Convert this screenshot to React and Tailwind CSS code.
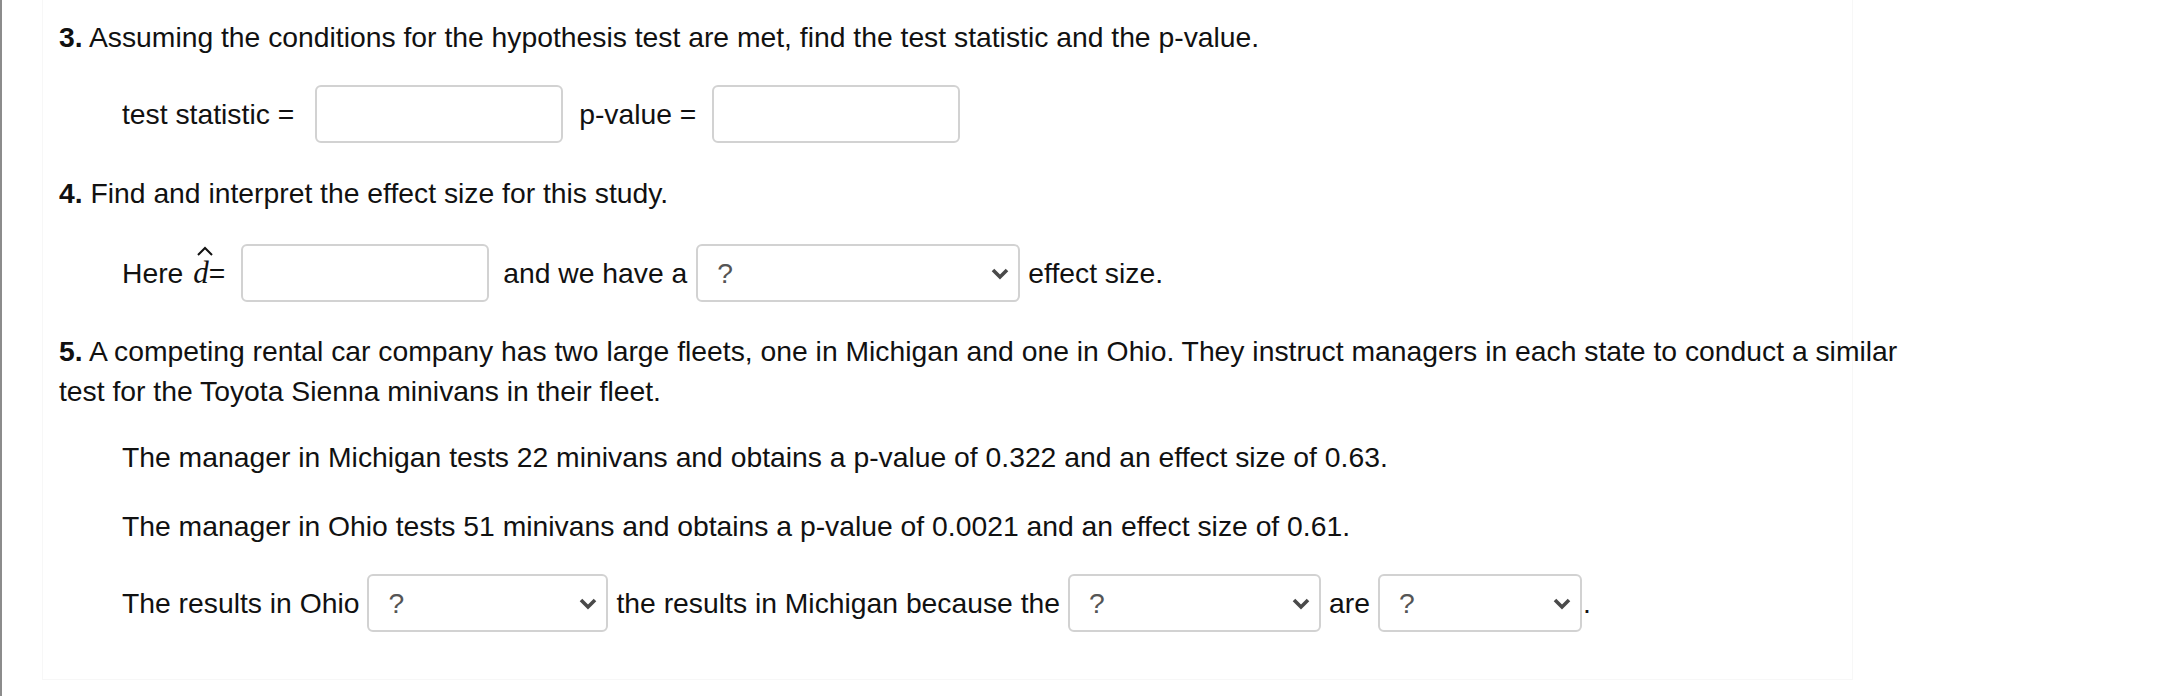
import React from 'react';

function Chevron() {
  return (
    <svg width="20" height="13" viewBox="0 0 20 13" className="shrink-0">
      <polyline points="3,3 10,10 17,3" fill="none" stroke="#4a4a4a" strokeWidth="3.6" strokeLinecap="butt" strokeLinejoin="miter" />
    </svg>
  );
}

function TextBox({ width }) {
  return <div className={`h-[58px] rounded-[6px] border-2 border-[#d2d2d2] bg-white ${width}`} />;
}

function Picker({ width }) {
  return (
    <div className={`h-[58px] rounded-[6px] border-2 border-[#d2d2d2] bg-white flex items-center justify-between pl-[19px] pr-[8px] ${width}`}>
      <span className="text-[#555]">?</span>
      <Chevron />
    </div>
  );
}

export default function App() {
  return (
    <div className="w-full h-[696px] bg-white flex text-[28.3px] leading-[40px] text-[#111]" style={{ fontFamily: '"Liberation Sans", Arial, sans-serif' }}>
      <div className="w-[2px] h-full bg-[#8c8c8c] shrink-0" />
      <div className="ml-[40px] w-[1811px] h-[680px] border-l border-r border-b border-[#f7f7f7] pl-[16px] pt-[17px]">
        <p>
          <b>3.</b> Assuming the conditions for the hypothesis test are met, find the test statistic and the p-value.
        </p>

        <div className="mt-[28px] ml-[63px] flex items-center gap-[16px]">
          <span>test statistic =</span>
          <div className="ml-[5px]">
            <TextBox width="w-[248px]" />
          </div>
          <span>p-value =</span>
          <TextBox width="w-[248px]" />
        </div>

        <p className="mt-[30px]">
          <b>4.</b> Find and interpret the effect size for this study.
        </p>

        <div className="mt-[31px] ml-[63px] flex items-center">
          <span className="flex items-center">
            Here&nbsp;
            <span className="relative italic text-[31px] ml-[2px]" style={{ fontFamily: '"Liberation Serif", "Times New Roman", serif' }}>
              d
              <svg width="16" height="10" viewBox="0 0 16 10" className="absolute left-[4px] top-[-7px]">
                <polyline points="1,9 8,2 15,9" fill="none" stroke="#111" strokeWidth="2" />
              </svg>
            </span>
            =
          </span>
          <div className="ml-[16px]">
            <TextBox width="w-[248px]" />
          </div>
          <span className="ml-[14px]">and we have a</span>
          <div className="ml-[9px]">
            <Picker width="w-[324px]" />
          </div>
          <span className="ml-[8px]">effect size.</span>
        </div>

        <p className="mt-[29px] w-[1860px]">
          <b>5.</b> A competing rental car company has two large fleets, one in Michigan and one in Ohio. They instruct managers in each state to conduct a similar test for the Toyota Sienna minivans in their fleet.
        </p>

        <p className="mt-[26px] ml-[63px]">
          The manager in Michigan tests 22 minivans and obtains a p-value of 0.322 and an effect size of 0.63.
        </p>

        <p className="mt-[29px] ml-[63px]">
          The manager in Ohio tests 51 minivans and obtains a p-value of 0.0021 and an effect size of 0.61.
        </p>

        <div className="mt-[28px] ml-[63px] flex items-center gap-[8px]">
          <span>The results in Ohio</span>
          <Picker width="w-[241px]" />
          <span>the results in Michigan because the</span>
          <Picker width="w-[253px]" />
          <span>are</span>
          <Picker width="w-[204px]" />
          <span className="-ml-[7px]">.</span>
        </div>
      </div>
    </div>
  );
}
